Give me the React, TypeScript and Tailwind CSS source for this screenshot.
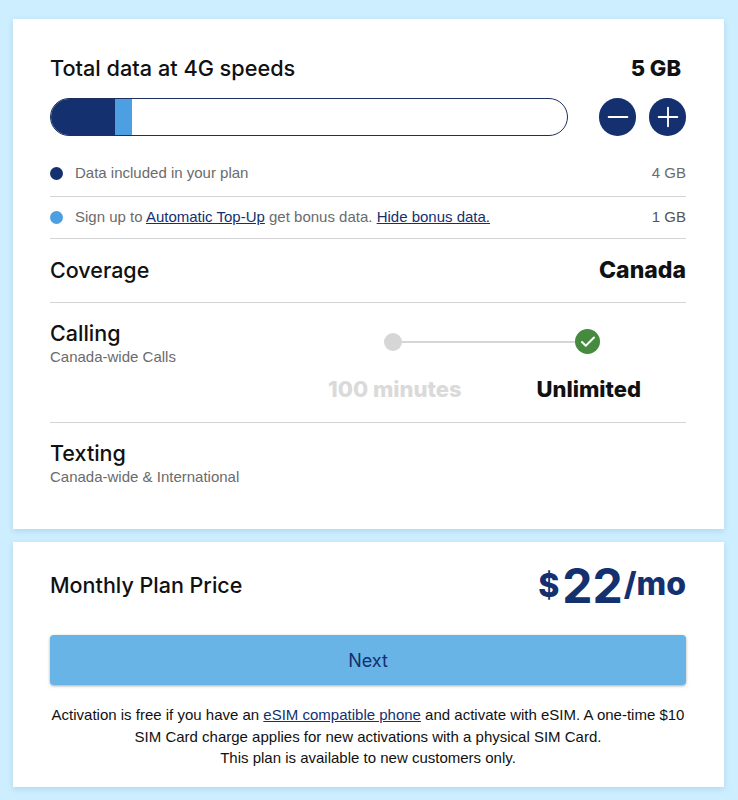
import React from 'react';
import { Minus, Plus, Check } from 'lucide-react';

const headFont = "font-['Inter',sans-serif]";
const bodyFont = "font-['Liberation_Sans',Arial,sans-serif]";

const LegendDot: React.FC<{ color: string }> = ({ color }) => (
  <span className={`w-[13px] h-[13px] rounded-full mr-[12px] shrink-0 ${color}`} />
);

const App: React.FC = () => {
  return (
    <div className={`w-[738px] h-[800px] overflow-hidden bg-[#cdeefe] pt-[19px] pl-[13px] pr-[14px] ${bodyFont}`}>
      {/* Plan details */}
      <div className="h-[510px] bg-white pl-[37px] pr-[38px] shadow-[0_2px_6px_rgba(60,120,160,0.2)]">
        <div className="flex justify-between items-center pt-[19px] h-[79px] text-[#111]">
          <h2 className={`text-[21.7px] font-medium ${headFont}`}>Total data at 4G speeds</h2>
          <span className={`text-[22px] font-extrabold mr-[5px] ${headFont}`}>5 GB</span>
        </div>

        <div className="flex items-center">
          <div className="w-[518px] h-[38px] rounded-full border border-[#1d2f5f] overflow-hidden flex">
            <div className="w-[64px] bg-[#14306f]" />
            <div className="w-[17px] bg-[#4c9fe0]" />
          </div>
          <button className="ml-[31px] w-[37px] h-[38px] rounded-full bg-[#14306f] text-white flex items-center justify-center">
            <Minus size={32} strokeWidth={1.5} className="shrink-0" />
          </button>
          <button className="ml-[13px] w-[37px] h-[38px] rounded-full bg-[#14306f] text-white flex items-center justify-center">
            <Plus size={32} strokeWidth={1.4} className="shrink-0" />
          </button>
        </div>

        <div className="mt-[16px] h-[45px] flex items-center justify-between border-b border-[#d4d4d4] text-[15px] text-[#6b6b6b] pb-[1px]">
          <div className="flex items-center">
            <LegendDot color="bg-[#14306f]" />
            <span>Data included in your plan</span>
          </div>
          <span>4 GB</span>
        </div>

        <div className="h-[42px] flex items-center justify-between border-b border-[#d4d4d4] text-[15px] text-[#6b6b6b]">
          <div className="flex items-center">
            <LegendDot color="bg-[#4c9fe0]" />
            <span>
              Sign up to <a className="text-[#14306f] underline">Automatic Top-Up</a> get bonus data.{' '}
              <a className="text-[#14306f] underline">Hide bonus data.</a>
            </span>
          </div>
          <span className="text-[#555]">1 GB</span>
        </div>

        <div className="h-[64px] flex items-center justify-between border-b border-[#d4d4d4] text-[#111]">
          <span className={`text-[21.5px] font-medium ${headFont}`}>Coverage</span>
          <span className={`text-[23px] font-extrabold ${headFont}`}>Canada</span>
        </div>

        <div className="h-[120px] flex justify-between border-b border-[#d4d4d4]">
          <div className="pt-[16px]">
            <div className={`text-[21.5px] leading-[28px] font-medium text-[#111] ${headFont}`}>Calling</div>
            <div className="text-[15px] leading-[16px] mt-[2px] text-[#6b6b6b]">Canada-wide Calls</div>
          </div>
          <div className="w-[313px] mr-[45px] pt-[26px]">
            <div className="flex items-center justify-between pl-[56px] pr-[41px]">
              <span className="w-[18px] h-[18px] rounded-full bg-[#d6d6d6]" />
              <span className="flex-1 h-[2px] bg-[#d6d6d6]" />
              <span className="w-[25px] h-[25px] rounded-full bg-[#458a3e] text-white flex items-center justify-center">
                <Check size={18} strokeWidth={2.6} />
              </span>
            </div>
            <div className={`mt-[21px] flex justify-between text-[22px] leading-[28px] font-extrabold ${headFont}`}>
              <span className="text-[#dadada]">100 minutes</span>
              <span className="text-[#111]">Unlimited</span>
            </div>
          </div>
        </div>

        <div className="pt-[16px]">
          <div className={`text-[21.5px] leading-[28px] font-medium text-[#111] ${headFont}`}>Texting</div>
          <div className="text-[15px] leading-[16px] mt-[2px] text-[#6b6b6b]">Canada-wide &amp; International</div>
        </div>
      </div>

      {/* Price */}
      <div className="mt-[13px] h-[245px] bg-white pl-[37px] pr-[38px] shadow-[0_2px_6px_rgba(60,120,160,0.2)]">
        <div className="h-[87px] mb-[6px] flex items-center justify-between text-[#111]">
          <span className={`text-[21.5px] font-medium ${headFont}`}>Monthly Plan Price</span>
          <span className={`flex items-center font-extrabold text-[#14306f] ${headFont}`}>
            <span className="text-[32px] leading-none mr-[3px]">$</span>
            <span className="text-[48px] leading-none font-bold">22</span>
            <span className="text-[32px] leading-none ml-[1px] mb-[3px]">/mo</span>
          </span>
        </div>
        <button className={`w-full h-[50px] rounded-[4px] bg-[#69b4e6] text-[#14306f] text-[18px] font-normal shadow-[0_1px_3px_rgba(0,0,0,0.35)] ${headFont}`}>
          Next
        </button>
        <p className="mt-[19px] text-center text-[15px] leading-[21.5px] text-[#111]">
          Activation is free if you have an <a className="text-[#14306f] underline">eSIM compatible phone</a> and activate with eSIM. A one-time $10
          <br />
          SIM Card charge applies for new activations with a physical SIM Card.
          <br />
          This plan is available to new customers only.
        </p>
      </div>
    </div>
  );
};

export default App;
